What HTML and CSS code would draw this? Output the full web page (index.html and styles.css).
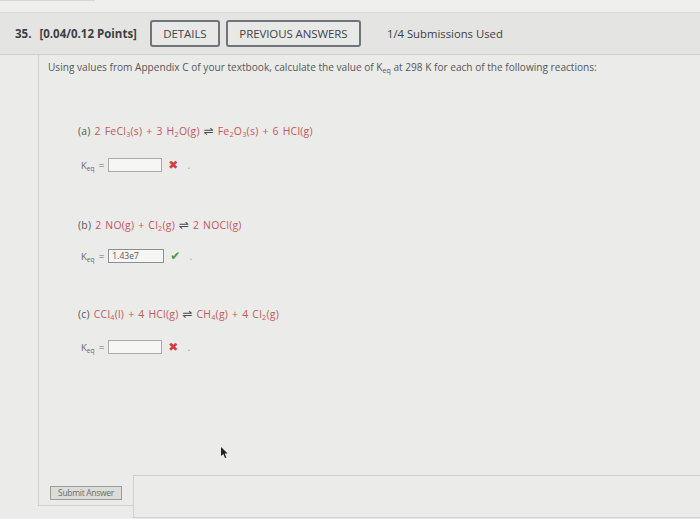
FILE: index.html
```html
<!DOCTYPE html>
<html>
<head>
<meta charset="utf-8">
<link rel="stylesheet" href="styles.css">
</head>
<body>
<div class="topstrip"><div class="tab"></div></div>
<div class="header">
  <span class="qnum">35.</span>
  <span class="points">[0.04/0.12 Points]</span>
  <span class="btn btn-details">DETAILS</span>
  <span class="btn btn-prev">PREVIOUS ANSWERS</span>
  <span class="subs">1/4 Submissions Used</span>
</div>
<div class="content">
  <p class="instr">Using values from Appendix C of your textbook, calculate the value of K<sub>eq</sub> at 298 K for each of the following reactions:</p>
  <div class="parts">
    <div class="part part-a">
      <div class="eq"><span class="lbl">(a)</span> <span class="rx">2 FeCl<sub>3</sub>(s) + 3 H<sub>2</sub>O(g) <span class="arrow">⇌</span> Fe<sub>2</sub>O<sub>3</sub>(s) + 6 HCl(g)</span></div>
      <div class="keq"><span class="k">K<sub>eq</sub></span><span class="equals">=</span><span class="box"></span><span class="mark wrong">✖</span><span class="dot">.</span></div>
    </div>
    <div class="part part-b">
      <div class="eq"><span class="lbl">(b)</span> <span class="rx">2 NO(g) + Cl<sub>2</sub>(g) <span class="arrow">⇌</span> 2 NOCl(g)</span></div>
      <div class="keq"><span class="k">K<sub>eq</sub></span><span class="equals">=</span><span class="box box-b">1.43e7</span><span class="mark right">✔</span><span class="dot">.</span></div>
    </div>
    <div class="part part-c">
      <div class="eq"><span class="lbl">(c)</span> <span class="rx">CCl<sub>4</sub>(l) + 4 HCl(g) <span class="arrow">⇌</span> CH<sub>4</sub>(g) + 4 Cl<sub>2</sub>(g)</span></div>
      <div class="keq"><span class="k">K<sub>eq</sub></span><span class="equals">=</span><span class="box"></span><span class="mark wrong">✖</span><span class="dot">.</span></div>
    </div>
  </div>
</div>
<div class="footer">
  <div class="submit-cell"><span class="submit">Submit Answer</span></div>
  <div class="rest-cell"></div>
</div>
<svg class="cursor" width="8" height="12" viewBox="0 0 8 12"><path d="M0 0 L0 9 L2.3 7 L4 11 L5.3 10.4 L3.7 6.6 L6.6 6.4 Z" fill="#222"/></svg>
</body>
</html>
```
FILE: styles.css
```css
html, body {
  margin: 0;
  padding: 0;
}
body {
  width: 700px;
  height: 519px;
  overflow: hidden;
  background: #ebebe9;
  font-family: "Open Sans", "Liberation Sans", sans-serif;
  color: #4a4c50;
  position: relative;
}
.topstrip {
  height: 12px;
  background: #efefed;
}
.tab {
  width: 95px;
  height: 1px;
  background: #d6d6d4;
}
.header {
  background: #e4e4e2;
  border-top: 1px solid #d8d8d6;
  border-bottom: 1px solid #cfcfcd;
  display: flex;
  align-items: center;
  padding-left: 15px;
  box-sizing: border-box;
  height: 43px;
}
.qnum {
  font-weight: bold;
  font-size: 11.5px;
  color: #3c3f44;
  margin-right: 8px;
}
.points {
  font-weight: bold;
  font-size: 11.5px;
  color: #3c3f44;
  margin-right: 13px;
}
.btn {
  display: inline-flex;
  align-items: center;
  justify-content: center;
  height: 27px;
  box-sizing: border-box;
  border: 2px solid #6e747a;
  border-radius: 3px;
  font-size: 11.5px;
  color: #3f454c;
  background: #e8e8e6;
  letter-spacing: -0.1px;
}
.btn-details {
  width: 70px;
}
.btn-prev {
  width: 135px;
  margin-left: 6px;
}
.subs {
  margin-left: 26px;
  font-size: 11.3px;
  color: #3c3f44;
}
.content {
  margin-left: 38px;
  border-left: 1px solid #cfcfcd;
  padding-left: 9px;
  height: 420px;
  box-sizing: border-box;
  padding-top: 5px;
}
.instr {
  margin: 0;
  font-size: 10.1px;
  color: #55575b;
  line-height: 14px;
  white-space: nowrap;
}
.instr sub, .k sub {
  font-size: 70%;
  vertical-align: -2px;
  line-height: 0;
}
.parts {
  padding-left: 30px;
  padding-top: 50px;
}
.part-a {
  height: 94px;
}
.part-b {
  height: 89px;
}
.eq {
  font-size: 10.4px;
  letter-spacing: 0.25px;
  word-spacing: 1px;
  line-height: 14px;
  white-space: nowrap;
}
.eq sub {
  font-size: 70%;
  vertical-align: -2px;
  line-height: 0;
}
.lbl {
  color: #555860;
}
.rx {
  color: #c4565d;
}
.arrow {
  color: #4a4c50;
  font-family: "DejaVu Sans", sans-serif;
  font-size: 12px;
  letter-spacing: 0;
}
.keq {
  display: flex;
  align-items: center;
  margin-top: 19px;
  padding-left: 3px;
  height: 16px;
}
.part-b .keq {
  margin-top: 16px;
}
.part-c .keq {
  margin-top: 18px;
}
.k {
  font-size: 9.5px;
  color: #666a70;
}
.equals {
  font-size: 10px;
  margin-left: 4px;
  margin-right: 4px;
  color: #666a70;
}
.box {
  width: 54px;
  height: 14px;
  box-sizing: border-box;
  border: 1px solid #a6a9ad;
  background: #f6f6f4;
  font-size: 8.5px;
  line-height: 12px;
  padding-left: 3px;
  color: #55585d;
}
.box-b {
  width: 56px;
  border-color: #8b8f94;
}
.mark {
  margin-left: 6px;
  font-family: "DejaVu Sans", sans-serif;
  font-size: 12px;
  line-height: 14px;
}
.wrong {
  color: #d93a42;
}
.right {
  color: #4b9a3c;
}
.dot {
  margin-left: 9px;
  color: #9a9ca0;
  font-size: 10px;
}
.footer {
  display: flex;
  align-items: flex-start;
  height: 44px;
}
.submit-cell {
  margin-left: 38px;
  width: 95px;
  height: 31px;
  border-left: 1px solid #cfcfcd;
  border-bottom: 1px solid #cfcfcd;
  box-sizing: border-box;
  padding-left: 11px;
  padding-top: 11px;
}
.submit {
  display: block;
  width: 72px;
  height: 14px;
  box-sizing: border-box;
  border: 1px solid #9a9c9e;
  background: #dcdcda;
  font-size: 8.5px;
  line-height: 12px;
  text-align: center;
  color: #6a6c70;
  letter-spacing: -0.3px;
}
.rest-cell {
  flex: 1;
  height: 43px;
  border-top: 1px solid #cfcfcd;
  border-left: 1px solid #cfcfcd;
  border-bottom: 1px solid #cfcfcd;
  box-sizing: border-box;
}
.cursor {
  position: absolute;
  left: 221px;
  top: 447px;
}
```
